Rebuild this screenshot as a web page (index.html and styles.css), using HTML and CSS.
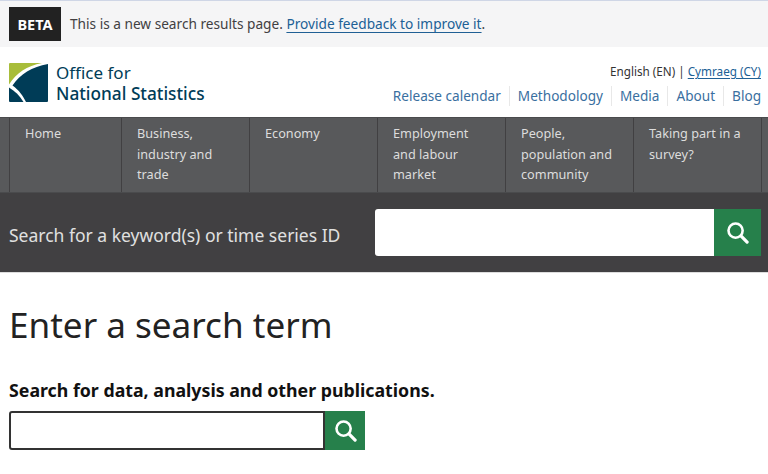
FILE: index.html
```html
<!DOCTYPE html>
<html lang="en">
<head>
<meta charset="utf-8">
<title>Enter a search term</title>
<link rel="stylesheet" href="styles.css">
</head>
<body>
<div class="beta">
  <span class="badge">BETA</span>
  <span class="beta-text">This is a new search results page. <a href="#">Provide feedback to improve it</a>.</span>
</div>
<header class="masthead">
  <a class="brand" href="#">
    <svg class="logo" viewBox="0 0 39 39" width="39" height="39" aria-hidden="true">
      <path d="M1 0H33C18 3 7 10 0 21.500V1Q0 0 1 0Z" fill="#a8bd3a"/>
      <path d="M39 1V38Q39 39 38 39H17C14 33 10 27 3.500 22.500C11 11 23 4 39 1Z" fill="#003c57"/>
      <path d="M0 24.500C6 28 11 33 14.500 39H1Q0 39 0 38Z" fill="#003c57"/>
    </svg>
    <span class="wordmark"><span>Office for</span><strong>National Statistics</strong></span>
  </a>
  <div class="utility">
    <div class="lang">English (EN) <span class="pipe">|</span> <a href="#">Cymraeg (CY)</a></div>
    <nav class="secondary">
      <a href="#">Release calendar</a><a href="#">Methodology</a><a href="#">Media</a><a href="#">About</a><a href="#">Blog</a>
    </nav>
  </div>
</header>
<nav class="primary">
  <a href="#">Home</a>
  <a href="#">Business, industry and trade</a>
  <a href="#">Economy</a>
  <a href="#">Employment and labour market</a>
  <a href="#">People, population and community</a>
  <a href="#">Taking part in a survey?</a>
</nav>
<form class="site-search">
  <label class="site-label" for="q1">Search for a keyword(s) or time series ID</label>
  <div class="site-field">
    <input id="q1" class="site-input" type="text">
    <button class="site-btn" type="button" aria-label="Search">
      <svg viewBox="0 0 24 24" width="23" height="23" aria-hidden="true"><circle cx="10" cy="10" r="7.4" fill="none" stroke="#fff" stroke-width="2.7"/><path d="M15.6 15.6L22 22" stroke="#fff" stroke-width="3.4" stroke-linecap="round"/></svg>
    </button>
  </div>
</form>
<main class="content">
  <h1>Enter a search term</h1>
  <label class="main-label" for="q2">Search for data, analysis and other publications.</label>
  <div class="main-field">
    <input id="q2" class="main-input" type="text">
    <button class="main-btn" type="button" aria-label="Search">
      <svg viewBox="0 0 24 24" width="23" height="23" aria-hidden="true"><circle cx="10" cy="10" r="7.4" fill="none" stroke="#fff" stroke-width="2.7"/><path d="M15.6 15.6L22 22" stroke="#fff" stroke-width="3.4" stroke-linecap="round"/></svg>
    </button>
  </div>
</main>
</body>
</html>
```
FILE: styles.css
```css
* { box-sizing: border-box; }
html, body { margin: 0; padding: 0; }
body { font-family: "Noto Sans", "Open Sans", sans-serif; color: #222; background: #fff; overflow: hidden; }
a { color: #206095; text-decoration: none; }

.beta { height: 47px; background: #f5f5f6; border-top: 1px solid #cfd6e6; padding: 6px 9px 0; display: flex; align-items: flex-start; gap: 9px; }
.badge { width: 52px; height: 34px; background: #222; color: #fff; font-weight: 700; font-size: 14.500px; display: flex; align-items: center; justify-content: center; }
.beta-text { font-size: 13.670px; line-height: 33px; color: #414042; }
.beta-text a { text-decoration: underline; text-underline-offset: 3px; }

.masthead { height: 70px; padding: 16px 7px 0 9px; display: flex; justify-content: space-between; }
.brand { display: flex; gap: 8px; height: 39px; color: #003c57; }
.logo { display: block; }
.wordmark { display: flex; flex-direction: column; font-size: 17px; line-height: 21px; margin-top: -1px; color: #003c57; }
.wordmark strong { font-weight: 500; font-size: 17.250px; }

.utility { display: flex; flex-direction: column; align-items: flex-end; }
.lang { font-size: 11.700px; line-height: 16px; color: #333; }
.lang a { text-decoration: underline; text-underline-offset: 2px; }
.secondary { display: flex; margin-top: 7px; font-size: 13.600px; line-height: 20px; }
.secondary a { padding: 0 8px; border-left: 1px solid #e8e8e8; color: #3a6f9f; }
.secondary a:first-child { border-left: 0; }
.secondary a:last-child { padding-right: 0; }

.primary { height: 76px; background: #58595b; border-top: 1px solid #4a4b4d; border-bottom: 1px solid #4a4b4d; padding-left: 9px; display: flex; }
.primary a { width: 128px; flex: none; padding: 5px 15px 0; border-left: 1px solid #414042; color: #ddd; font-size: 12.700px; line-height: 20.500px; }
.primary a:first-child { width: 112px; }
.primary a:last-child { border-right: 1px solid #414042; width: 129px; }

.site-search { height: 80px; background: #414042; border-bottom: 1px solid #ddd; padding: 16px 7px 0 9px; display: flex; justify-content: space-between; }
.site-label { font-size: 17.500px; line-height: 52px; color: #e0e0e0; }
.site-field { display: flex; width: 386px; height: 47px; }
.site-input { flex: 1; min-width: 0; border: 0; background: #fff; border-radius: 3px 0 0 3px; }
.site-btn { width: 47px; border: 0; padding: 0; background: #26804b; display: flex; align-items: center; justify-content: center; }

.content { padding: 0 9px; }
h1 { margin: 28px 0 0; font-size: 35.100px; line-height: 46px; font-weight: 400; color: #222; }
.main-label { display: block; margin-top: 31px; font-size: 17.750px; line-height: 24px; font-weight: 700; color: #111; }
.main-field { display: flex; margin-top: 9px; height: 39px; }
.main-input { width: 316px; border: 2px solid #333; border-radius: 3px 0 0 3px; background: #fff; }
.main-btn { width: 40px; border: 0; padding: 0; background: #26804b; display: flex; align-items: center; justify-content: center; }
```
